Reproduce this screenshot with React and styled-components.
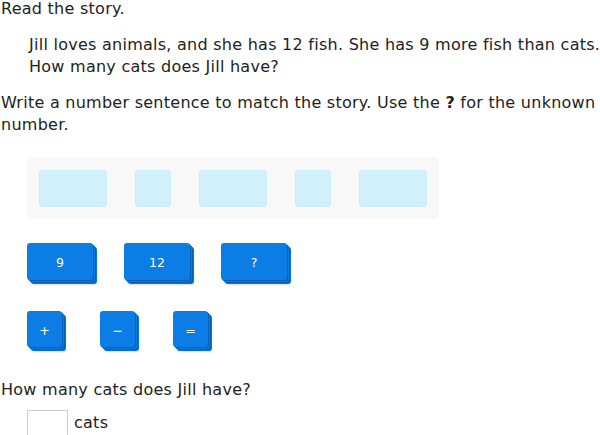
import React from 'react';
import styled, { createGlobalStyle } from 'styled-components';

const GlobalStyle = createGlobalStyle`
  html, body {
    margin: 0;
    padding: 0;
    background: #ffffff;
  }
  body {
    font-family: 'DejaVu Sans', Verdana, sans-serif;
    font-size: 16px;
    letter-spacing: 0.26px;
    line-height: 22px;
    color: #222222;
  }
`;

const slots = [68, 36, 68, 36, 68];
const numbers = ['9', '12', '?'];
const operators = ['+', '\u2212', '='];

const App = () => {
  return (
    <Page>
      <GlobalStyle />
      <Lead>Read the story.</Lead>
      <Story>
        Jill loves animals, and she has 12 fish. She has 9 more fish than cats.
        <br />
        How many cats does Jill have?
      </Story>
      <Prompt>
        Write a number sentence to match the story. Use the <b>?</b> for the
        unknown number.
      </Prompt>
      <DropArea>
        {slots.map((w, i) => (
          <Slot key={i} w={w} />
        ))}
      </DropArea>
      <TileRow gap={31} top={24}>
        {numbers.map(n => (
          <Tile key={n} w={66} h={37}>
            {n}
          </Tile>
        ))}
      </TileRow>
      <TileRow gap={38} top={31}>
        {operators.map(o => (
          <Tile key={o} w={35} h={36}>
            {o}
          </Tile>
        ))}
      </TileRow>
      <Question>How many cats does Jill have?</Question>
      <AnswerRow>
        <AnswerBox type="text" />
        <Unit>cats</Unit>
      </AnswerRow>
    </Page>
  );
};

const Page = styled.div`
  padding: 0 0 0 1px;
  width: 600px;
  height: 435px;
  overflow: hidden;
  box-sizing: border-box;
`;
const Lead = styled.p`
  margin: -2px 0 0;
`;
const Story = styled.p`
  margin: 14px 0 0;
  padding-left: 28px;
  white-space: nowrap;
`;
const Prompt = styled.p`
  margin: 14px 0 0;
  width: 599px;
  b {
    font-weight: bold;
  }
`;
const DropArea = styled.div`
  display: flex;
  gap: 28px;
  margin: 21px 0 0 26px;
  padding: 13px 12px 12px;
  width: 412px;
  height: 62px;
  box-sizing: border-box;
  background: #f8f8f8;
  border-radius: 4px;
`;
const Slot = styled.div`
  width: ${props => props.w}px;
  height: 37px;
  box-sizing: border-box;
  background: #d1f0fc;
  border: 1px solid #c9ecfb;
  border-radius: 3px;
`;
const TileRow = styled.div`
  display: flex;
  gap: ${props => props.gap}px;
  margin: ${props => props.top}px 0 0 26px;
`;
const Tile = styled.div`
  display: flex;
  align-items: center;
  justify-content: center;
  width: ${props => props.w}px;
  height: ${props => props.h}px;
  padding-top: 3px;
  box-sizing: border-box;
  background: #0b7de4;
  color: #ffffff;
  font-size: 12.5px;
  letter-spacing: 0;
  border-radius: 3px;
  box-shadow: 1px 1px 0 #0560bc, 2px 2px 0 #0a78dc, 3px 3px 0 #0560bc,
    4px 4px 0 #0a74d8, 4px 5px 2px rgba(0, 0, 0, 0.15);
`;
const Question = styled.p`
  margin: 32px 0 0;
`;
const AnswerRow = styled.div`
  display: flex;
  align-items: center;
  gap: 6px;
  margin: 9px 0 0 26px;
`;
const AnswerBox = styled.input`
  width: 41px;
  height: 26px;
  margin: 0;
  padding: 0;
  box-sizing: border-box;
  border: 1px solid #cccccc;
  outline: none;
`;
const Unit = styled.span``;

export default App;
